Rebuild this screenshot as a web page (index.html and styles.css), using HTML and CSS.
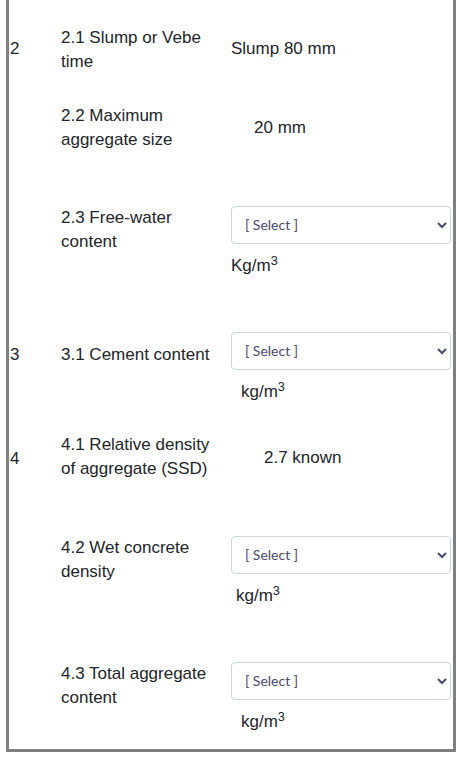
FILE: index.html
```
<!DOCTYPE html>
<html lang="en">
<head>
<meta charset="utf-8">
<title>Mix design</title>
<link rel="stylesheet" href="styles.css">
</head>
<body>
<div class="sheet">
  <div class="row row-a">
    <div class="num off11">2</div>
    <div class="label">2.1 Slump or Vebe time</div>
    <div class="value off11">Slump 80 mm</div>
  </div>
  <div class="row row-b">
    <div class="num"></div>
    <div class="label">2.2 Maximum aggregate size</div>
    <div class="value off12 ind23">20 mm</div>
  </div>
  <div class="row row-c">
    <div class="num"></div>
    <div class="label">2.3 Free-water content</div>
    <div class="value">
      <select class="pick"><option>[ Select ]</option></select>
      <div class="unit">Kg/m<sup>3</sup></div>
    </div>
  </div>
  <div class="row row-d">
    <div class="num off11">3</div>
    <div class="label off11">3.1 Cement content</div>
    <div class="value">
      <select class="pick"><option>[ Select ]</option></select>
      <div class="unit ind10">kg/m<sup>3</sup></div>
    </div>
  </div>
  <div class="row row-e">
    <div class="num off14">4</div>
    <div class="label">4.1 Relative density of aggregate (SSD)</div>
    <div class="value off13 ind33">2.7 known</div>
  </div>
  <div class="row row-f">
    <div class="num"></div>
    <div class="label">4.2 Wet concrete density</div>
    <div class="value">
      <select class="pick"><option>[ Select ]</option></select>
      <div class="unit ind5">kg/m<sup>3</sup></div>
    </div>
  </div>
  <div class="row row-g">
    <div class="num"></div>
    <div class="label">4.3 Total aggregate content</div>
    <div class="value">
      <select class="pick"><option>[ Select ]</option></select>
      <div class="unit ind10">kg/m<sup>3</sup></div>
    </div>
  </div>
</div>
</body>
</html>
```

FILE: styles.css
```
html, body {
  margin: 0;
  padding: 0;
  background: #ffffff;
}

body {
  font-family: "Liberation Sans", Arial, sans-serif;
  font-size: 17px;
  line-height: 24px;
  color: #212529;
}

.sheet {
  margin-left: 6px;
  width: 450px;
  box-sizing: border-box;
  border: 3px solid #808080;
  border-top: 0;
}

.row {
  display: grid;
  grid-template-columns: 52px 170px 220px;
  align-items: start;
}

.row-a { padding-top: 26px; padding-bottom: 30px; }
.row-b { padding-bottom: 54px; }
.row-c { padding-bottom: 54px; }
.row-d { padding-bottom: 29px; }
.row-e { padding-bottom: 55px; }
.row-f { padding-bottom: 54px; }
.row-g { padding-bottom: 15px; }

.num {
  padding-left: 1px;
}

.label {
  padding-right: 6px;
}

.off11 { margin-top: 11px; }
.off12 { margin-top: 12px; }
.off13 { margin-top: 13px; }
.off14 { margin-top: 14px; }

.ind5 { padding-left: 5px; }
.ind10 { padding-left: 10px; }
.ind23 { padding-left: 23px; }
.ind33 { padding-left: 33px; }

.pick {
  display: block;
  width: 220px;
  height: 38px;
  margin: 0;
  box-sizing: border-box;
  padding: 0 8px 2px 9px;
  font-family: Lato, "Liberation Sans", sans-serif;
  font-size: 14px;
  color: #4a4a6a;
  background-color: #ffffff;
  border: 1px solid #ced4da;
  border-radius: 4px;
}

.unit {
  margin-top: 10px;
}

.unit sup {
  font-size: 75%;
  line-height: 0;
  position: relative;
  top: -0.5em;
  vertical-align: baseline;
}
```
